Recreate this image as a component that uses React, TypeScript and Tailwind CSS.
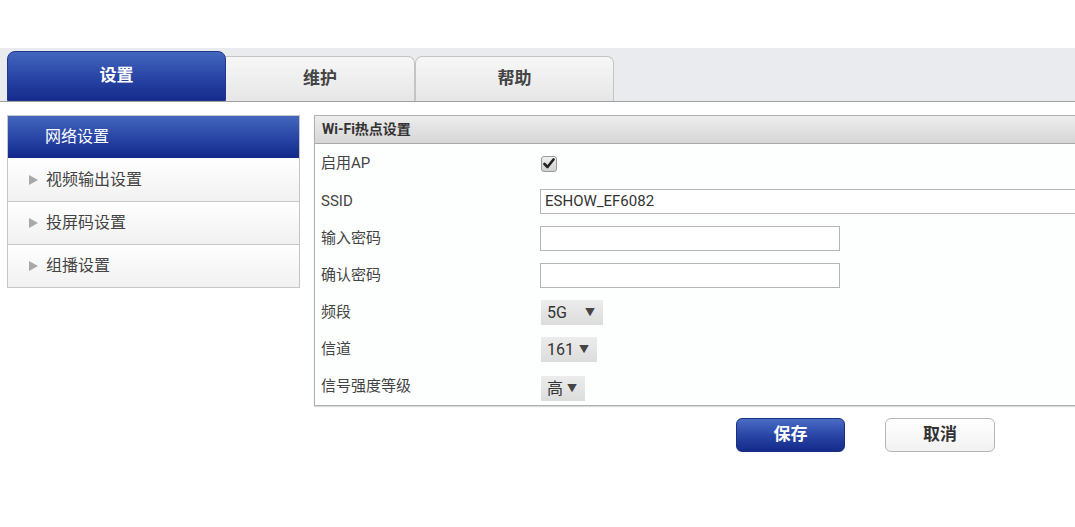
import React from "react";

const font = { fontFamily: '"Roboto", "Noto Sans CJK SC", sans-serif' };

function Arrow() {
  return (
    <svg width="9" height="10" viewBox="0 0 9 10" className="mr-[8px]">
      <polygon points="0,0 9,5 0,10" fill="#a8a8a8" />
    </svg>
  );
}

function Select({ value, w }: { value: string; w: string }) {
  return (
    <div
      className={`${w} h-[25px] flex items-center justify-between pl-[6px] pr-[8px] bg-gradient-to-b from-[#ececec] to-[#dcdcdc] text-[16px] text-[#333]`}
    >
      <span>{value}</span>
      <span className="text-[10px] text-[#444]">▼</span>
    </div>
  );
}

export default function App() {
  const rows: { label: string; control: React.ReactNode; h: string }[] = [
    {
      label: "启用AP",
      h: "h-[39px]",
      control: (
        <div className="w-[16px] h-[16px] rounded-[3px] border border-[#9a9a9a] bg-gradient-to-b from-[#f0f0f0] to-[#cfcfcf] flex items-center justify-center ml-[1px]">
          <svg width="12" height="11" viewBox="0 0 12 11">
            <path d="M1.5 6 L4.5 9 L10.5 1.5" stroke="#222" strokeWidth="2.6" fill="none" strokeLinecap="round" strokeLinejoin="round" />
          </svg>
        </div>
      ),
    },
    {
      label: "SSID",
      h: "h-[37px]",
      control: (
        <div className="w-[560px] h-[25px] border border-[#b5b5b5] bg-white flex items-center pl-[4px] text-[15px] text-[#333]">
          ESHOW_EF6082
        </div>
      ),
    },
    { label: "输入密码", h: "h-[37px]", control: <div className="w-[300px] h-[25px] border border-[#b5b5b5] bg-white" /> },
    { label: "确认密码", h: "h-[37px]", control: <div className="w-[300px] h-[25px] border border-[#b5b5b5] bg-white" /> },
    { label: "频段", h: "h-[37px]", control: <div className="ml-[1px]"><Select value="5G" w="w-[62px]" /></div> },
    { label: "信道", h: "h-[37px]", control: <div className="ml-[1px]"><Select value="161" w="w-[56px]" /></div> },
    { label: "信号强度等级", h: "h-[37px]", control: <div className="ml-[1px] mt-[4px]"><Select value="高" w="w-[44px]" /></div> },
  ];

  return (
    <div className="w-[1075px] h-[527px] bg-white overflow-hidden" style={font}>
      <div className="h-[48px] bg-white" />
      <div className="h-[54px] bg-[#e9ebee] border-b border-[#a0a0a0] flex items-end pl-[7px]">
        <div className="w-[219px] h-[50px] rounded-t-[8px] bg-gradient-to-b from-[#4466bd] via-[#2a46a6] to-[#162c8c] flex items-center justify-center text-white font-bold text-[17px] border border-[#1f3590]">
          设置
        </div>
        <div className="w-[189px] h-[45px] rounded-tr-[7px] border border-b-0 border-l-0 border-[#c4c4c4] bg-gradient-to-b from-[#f7f7f7] to-[#e6e6e6] flex items-center justify-center text-[#444] font-bold text-[17px]">
          维护
        </div>
        <div className="w-[199px] h-[45px] rounded-t-[7px] border border-b-0 border-[#c4c4c4] bg-gradient-to-b from-[#f7f7f7] to-[#e6e6e6] flex items-center justify-center text-[#444] font-bold text-[17px]">
          帮助
        </div>
      </div>
      <div className="flex pt-[13px]">
        <div className="ml-[7px] w-[293px] shrink-0 self-start border border-[#c6c6c6]">
          <div className="h-[42px] bg-gradient-to-b from-[#4466bd] via-[#2a46a6] to-[#13298a] flex items-center pl-[37px] text-white text-[16px]">
            网络设置
          </div>
          {["视频输出设置", "投屏码设置", "组播设置"].map((t, i) => (
            <div
              key={t}
              className={`h-[43px] flex items-center pl-[21px] text-[16px] text-[#444] bg-gradient-to-b from-white to-[#f1f1f1] ${i > 0 ? "border-t border-[#c6c6c6]" : ""}`}
            >
              <Arrow />
              {t}
            </div>
          ))}
        </div>
        <div className="ml-[14px] shrink-0 flex flex-col">
          <div className="w-[800px] border border-[#b0b0b0] bg-[#fdfefe] shadow-[0_1px_1px_rgba(0,0,0,0.15)]">
            <div className="h-[28px] bg-gradient-to-b from-[#ededed] to-[#d6d6d6] border-b border-[#a8a8a8] flex items-center pl-[7px] text-[14px] font-bold text-[#333]">
              Wi-Fi热点设置
            </div>
            {rows.map((r) => (
              <div key={r.label} className={`${r.h} grid grid-cols-[225px_1fr] items-center`}>
                <div className="pl-[6px] text-[15px] text-[#444]">{r.label}</div>
                <div className="flex items-center">{r.control}</div>
              </div>
            ))}
          </div>
          <div className="flex pt-[12px] pl-[422px] gap-[40px]">
            <div className="w-[109px] h-[34px] rounded-[6px] bg-gradient-to-b from-[#4a6cc4] via-[#2a46a6] to-[#142a8a] border border-[#1a2f80] flex items-center justify-center text-white font-bold text-[17px]">
              保存
            </div>
            <div className="w-[110px] h-[34px] rounded-[6px] bg-gradient-to-b from-white to-[#f2f2f2] border border-[#b5b5b5] flex items-center justify-center text-[#333] font-bold text-[17px]">
              取消
            </div>
          </div>
        </div>
      </div>
    </div>
  );
}
